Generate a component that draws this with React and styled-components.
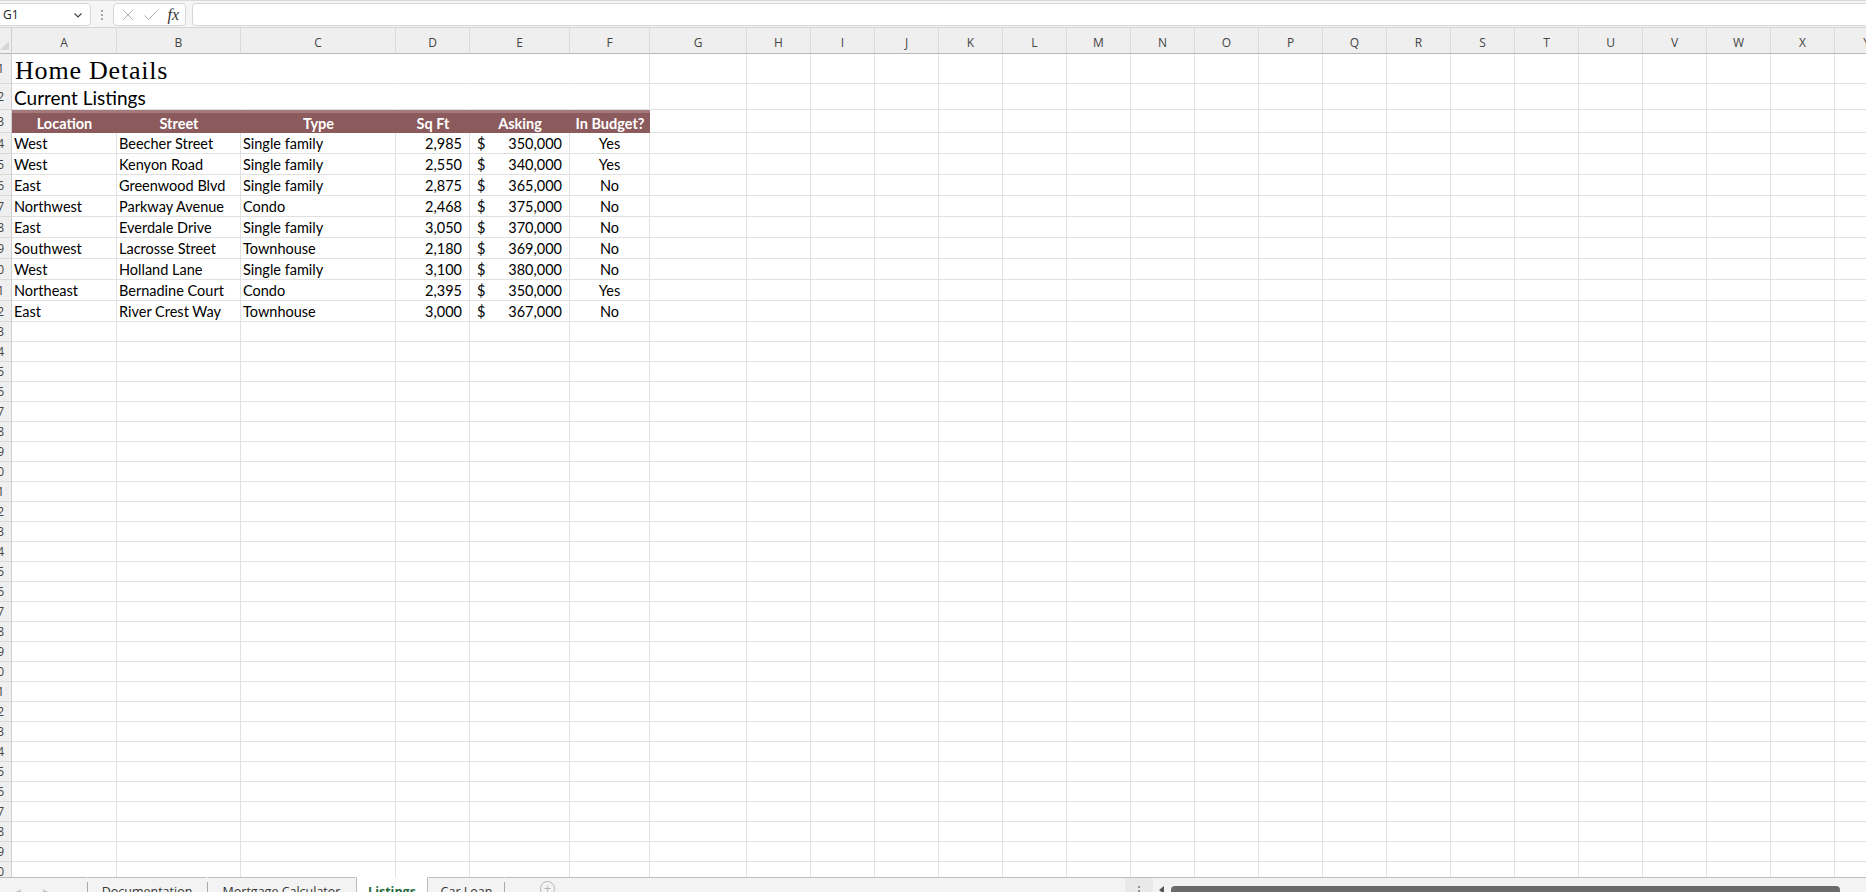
import React from 'react';
import styled, { createGlobalStyle } from 'styled-components';

const GlobalStyle = createGlobalStyle`
    html, body {
        margin: 0;
        padding: 0;
        height: 892px;
        overflow: hidden;
        background: #ffffff;
    }
    * {
        box-sizing: border-box;
    }
`;

const uiFont = `'Open Sans', 'Noto Sans', sans-serif`;
const cellFont = `Lato, 'Open Sans', sans-serif`;
const gridLine = '#e1e1e1';
const bandColor = '#8b5a5c';

const Page = styled.div`
    width: 1866px;
    height: 892px;
    display: flex;
    flex-direction: column;
    overflow: hidden;
    font-family: ${uiFont};
`;

const Toolbar = styled.div`
    height: 28px;
    flex: none;
    display: flex;
    align-items: center;
    gap: 6px;
    padding: 2px 0 1px 0;
    background: #f5f5f5;
    border-top: 1px solid #dadada;
    border-bottom: 1px solid #d4d4d4;
`;

const NameBox = styled.div`
    width: 95px;
    height: 100%;
    margin-left: -4px;
    display: flex;
    align-items: center;
    justify-content: space-between;
    padding: 0 6px 0 6px;
    background: #ffffff;
    border: 1px solid #d6d6d6;
    border-radius: 4px;
    font-size: 12px;
    color: #222;
`;

const Dots = styled.div`
    width: 10px;
    display: flex;
    justify-content: center;
`;

const FxBox = styled.div`
    width: 73px;
    height: 100%;
    display: flex;
    align-items: center;
    justify-content: space-between;
    padding: 0 6px 0 7px;
    background: #ffffff;
    border: 1px solid #d6d6d6;
    border-radius: 4px;
`;

const FxLabel = styled.span`
    font-family: 'Liberation Serif', serif;
    font-style: italic;
    font-size: 16px;
    color: #333;
`;

const FormulaInput = styled.div`
    flex: 1;
    height: 100%;
    margin-right: -6px;
    background: #ffffff;
    border: 1px solid #d6d6d6;
    border-radius: 4px;
`;

const Sheet = styled.div`
    flex: none;
    height: 849px;
    display: grid;
    grid-template-columns: 12px 105px 124px 155px 74px 100px 80px 97px repeat(18, 64px);
    grid-template-rows: 26px 30px 26px 23px repeat(9, 21px) repeat(28, 20px);
    overflow: hidden;
    background: #ffffff;
`;

const Corner = styled.div`
    background: #efefef;
    border-right: 1px solid #cfcfcf;
    border-bottom: 1px solid #b8b8b8;
    position: relative;
    &::after {
        content: '';
        position: absolute;
        right: 2px;
        bottom: 3px;
        border-left: 9px solid transparent;
        border-bottom: 9px solid #d6d6d6;
    }
`;

const ColHeader = styled.div`
    background: #efefef;
    border-right: 1px solid #dadada;
    border-bottom: 1px solid #b8b8b8;
    display: flex;
    align-items: center;
    justify-content: center;
    font-size: 12px;
    color: #444;
    padding-top: 4px;
`;

const RowHeader = styled.div`
    background: #efefef;
    border-right: 1px solid #cfcfcf;
    border-bottom: 1px solid #dadada;
    display: flex;
    align-items: center;
    justify-content: flex-end;
    padding-right: 7px;
    overflow: hidden;
    font-size: 12px;
    color: #444;
    white-space: nowrap;
`;

const Cell = styled.div`
    border-right: 1px solid ${(p) => (p.$open ? 'transparent' : gridLine)};
    border-bottom: 1px solid ${gridLine};
    display: flex;
    align-items: flex-end;
    justify-content: ${(p) => p.$align || 'flex-start'};
    padding: 0 ${(p) => p.$padRight || 2}px 1px 2px;
    font-family: ${cellFont};
    font-size: 14.5px;
    line-height: 17px;
    color: #000;
    white-space: nowrap;
`;

const TitleCell = styled(Cell)`
    font-family: 'Liberation Serif', 'DejaVu Serif', serif;
    font-size: 26px;
    line-height: 25px;
    letter-spacing: 0.8px;
    padding: 0 0 0 3px;
    overflow: visible;
`;

const SubtitleCell = styled(Cell)`
    font-size: 19px;
    line-height: 21px;
    padding: 0 0 1px 2px;
    overflow: visible;
`;

const BandCell = styled.div`
    background: ${bandColor};
    border-top: 3px solid #a57a7c;
    display: flex;
    align-items: flex-end;
    justify-content: center;
    padding-bottom: 1px;
    font-family: ${cellFont};
    font-weight: 700;
    font-size: 14.5px;
    line-height: 17px;
    color: #ffffff;
    white-space: nowrap;
`;

const MoneyCell = styled(Cell)`
    justify-content: space-between;
    padding: 0 7px 1px 7px;
`;

const TabBar = styled.div`
    flex: none;
    height: 30px;
    display: flex;
    align-items: stretch;
    background: #f3f3f3;
    font-size: 12.5px;
    color: #333;
`;

const NavArrows = styled.div`
    width: 87px;
    display: flex;
    gap: 22px;
    padding: 7px 0 0 13px;
    border-top: 1px solid #bdbdbd;
    color: #c4c4c4;
    font-size: 10px;
`;

const Tab = styled.div`
    width: ${(p) => p.$w}px;
    display: flex;
    justify-content: center;
    padding-top: 5px;
    border-top: 1px solid ${(p) => (p.$active ? 'transparent' : '#bdbdbd')};
    border-left: 1px solid ${(p) => (p.$active ? '#bdbdbd' : 'transparent')};
    border-right: 1px solid ${(p) => (p.$active ? '#bdbdbd' : 'transparent')};
    background: ${(p) => (p.$active ? '#ffffff' : 'transparent')};
    color: ${(p) => (p.$active ? '#1d6b3b' : '#333')};
    font-weight: ${(p) => (p.$active ? 700 : 400)};
    position: relative;
    &::before {
        content: '';
        display: ${(p) => (p.$sep ? 'block' : 'none')};
        position: absolute;
        left: -1px;
        top: 4px;
        height: 20px;
        border-left: 1px solid #a9a9a9;
    }
`;

const AddArea = styled.div`
    width: 620px;
    display: flex;
    padding: 3px 0 0 35px;
    border-top: 1px solid #bdbdbd;
    position: relative;
    &::before {
        content: '';
        position: absolute;
        left: -1px;
        top: 4px;
        height: 20px;
        border-left: 1px solid #a9a9a9;
    }
`;

const PlusCircle = styled.div`
    width: 15px;
    height: 15px;
    border: 1px solid #b5b5b5;
    border-radius: 50%;
    display: flex;
    align-items: center;
    justify-content: center;
    color: #b5b5b5;
    font-size: 13px;
    line-height: 1;
`;

const ScrollArea = styled.div`
    flex: 1;
    display: flex;
    border-top: 1px solid #bdbdbd;
`;

const ScrollGrip = styled.div`
    width: 28px;
    background: #e9e9e9;
    display: flex;
    justify-content: center;
    padding-top: 6px;
`;

const ScrollArrow = styled.div`
    width: 18px;
    display: flex;
    justify-content: center;
    padding-top: 8px;
`;

const ScrollThumb = styled.div`
    width: 669px;
    height: 14px;
    margin-top: 8px;
    background: #6b6b6b;
    border-radius: 4px;
`;

const colLetters = 'ABCDEFGHIJKLMNOPQRSTUVWXY'.split('');

const listings = [
    ['West', 'Beecher Street', 'Single family', '2,985', '350,000', 'Yes'],
    ['West', 'Kenyon Road', 'Single family', '2,550', '340,000', 'Yes'],
    ['East', 'Greenwood Blvd', 'Single family', '2,875', '365,000', 'No'],
    ['Northwest', 'Parkway Avenue', 'Condo', '2,468', '375,000', 'No'],
    ['East', 'Everdale Drive', 'Single family', '3,050', '370,000', 'No'],
    ['Southwest', 'Lacrosse Street', 'Townhouse', '2,180', '369,000', 'No'],
    ['West', 'Holland Lane', 'Single family', '3,100', '380,000', 'No'],
    ['Northeast', 'Bernadine Court', 'Condo', '2,395', '350,000', 'Yes'],
    ['East', 'River Crest Way', 'Townhouse', '3,000', '367,000', 'No'],
];

const headers = ['Location', 'Street', 'Type', 'Sq Ft', 'Asking', 'In Budget?'];

const Chevron = () => (
    <svg width="12" height="12" viewBox="0 0 12 12">
        <path d="M2.5 4.5 L6 8 L9.5 4.5" fill="none" stroke="#444" strokeWidth="1.2" />
    </svg>
);

const VDots = ({ color = '#8a8a8a' }) => (
    <svg width="4" height="14" viewBox="0 0 4 14">
        <circle cx="2" cy="3" r="1" fill={color} />
        <circle cx="2" cy="7" r="1" fill={color} />
        <circle cx="2" cy="11" r="1" fill={color} />
    </svg>
);

const Cross = () => (
    <svg width="14" height="14" viewBox="0 0 14 14">
        <path d="M2 2 L12 12 M12 2 L2 12" stroke="#b0b0b0" strokeWidth="1" fill="none" />
    </svg>
);

const Check = () => (
    <svg width="16" height="14" viewBox="0 0 16 14">
        <path d="M1.5 7.5 L5.5 11.5 L14.5 2.5" stroke="#b0b0b0" strokeWidth="1" fill="none" />
    </svg>
);

const emptyCells = (key, count) =>
    Array.from({ length: count }, (_, i) => <Cell key={`${key}-${i}`} />);

const App = () => {
    const extraCols = colLetters.length - 6;
    const rows = [];

    // row 1 - title
    rows.push(<RowHeader key="r1">1</RowHeader>);
    rows.push(<TitleCell key="t1" $open>Home Details</TitleCell>);
    for (let i = 1; i < colLetters.length; i++) {
        rows.push(<Cell key={`t1-${i}`} $open={i < 5} />);
    }

    // row 2 - subtitle
    rows.push(<RowHeader key="r2">2</RowHeader>);
    rows.push(<SubtitleCell key="t2" $open>Current Listings</SubtitleCell>);
    for (let i = 1; i < colLetters.length; i++) {
        rows.push(<Cell key={`t2-${i}`} $open={i < 5} />);
    }

    // row 3 - table header band
    rows.push(<RowHeader key="r3">3</RowHeader>);
    headers.forEach((h) => rows.push(<BandCell key={h}>{h}</BandCell>));
    rows.push(...emptyCells('r3e', extraCols));

    // data rows
    listings.forEach((item, idx) => {
        const n = idx + 4;
        rows.push(<RowHeader key={`r${n}`}>{n}</RowHeader>);
        rows.push(<Cell key={`${n}a`}>{item[0]}</Cell>);
        rows.push(<Cell key={`${n}b`}>{item[1]}</Cell>);
        rows.push(<Cell key={`${n}c`}>{item[2]}</Cell>);
        rows.push(<Cell key={`${n}d`} $align="flex-end" $padRight={7}>{item[3]}</Cell>);
        rows.push(
            <MoneyCell key={`${n}e`}>
                <span>$</span>
                <span>{item[4]}</span>
            </MoneyCell>
        );
        rows.push(<Cell key={`${n}f`} $align="center">{item[5]}</Cell>);
        rows.push(...emptyCells(`${n}e`, extraCols));
    });

    // empty rows
    for (let n = 13; n <= 40; n++) {
        rows.push(<RowHeader key={`r${n}`}>{n}</RowHeader>);
        rows.push(...emptyCells(`e${n}`, colLetters.length));
    }

    return (
        <Page>
            <GlobalStyle />
            <Toolbar>
                <NameBox>
                    <span>G1</span>
                    <Chevron />
                </NameBox>
                <Dots>
                    <VDots />
                </Dots>
                <FxBox>
                    <Cross />
                    <Check />
                    <FxLabel>fx</FxLabel>
                </FxBox>
                <FormulaInput />
            </Toolbar>
            <Sheet>
                <Corner />
                {colLetters.map((c) => (
                    <ColHeader key={c}>{c}</ColHeader>
                ))}
                {rows}
            </Sheet>
            <TabBar>
                <NavArrows>
                    <span>◀</span>
                    <span>▶</span>
                </NavArrows>
                <Tab $w={120} $sep>Documentation</Tab>
                <Tab $w={149} $sep>Mortgage Calculator</Tab>
                <Tab $w={72} $active>Listings</Tab>
                <Tab $w={77}>Car Loan</Tab>
                <AddArea>
                    <PlusCircle>+</PlusCircle>
                </AddArea>
                <ScrollArea>
                    <ScrollGrip>
                        <VDots color="#777" />
                    </ScrollGrip>
                    <ScrollArrow>
                        <svg width="6" height="8" viewBox="0 0 6 8">
                            <path d="M5 0 L0 4 L5 8 Z" fill="#555" />
                        </svg>
                    </ScrollArrow>
                    <ScrollThumb />
                </ScrollArea>
            </TabBar>
        </Page>
    );
};

export default App;
